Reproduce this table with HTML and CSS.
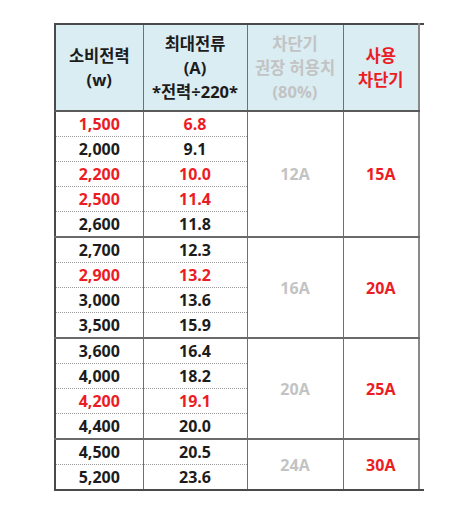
FILE: index.html
```html
<!DOCTYPE html>
<html lang="ko">
<head>
<meta charset="utf-8">
<link rel="stylesheet" href="styles.css">
</head>
<body>
<table class="tbl">
  <colgroup>
    <col class="c1"><col class="c2"><col class="c3"><col class="c4"><col class="c5">
  </colgroup>
  <thead>
    <tr>
      <th>소비전력<br>(w)</th>
      <th>최대전류<br>(A)<br>*전력÷220*</th>
      <th class="grey">차단기<br>권장 허용치<br>(80%)</th>
      <th class="red">사용<br>차단기</th>
      <th class="edge"></th>
    </tr>
  </thead>
  <tbody class="grp">
    <tr><td class="red">1,500</td><td class="red">6.8</td><td class="grey big" rowspan="5">12A</td><td class="red big" rowspan="5">15A</td><td class="edge" rowspan="5"></td></tr>
    <tr><td>2,000</td><td>9.1</td></tr>
    <tr><td class="red">2,200</td><td class="red">10.0</td></tr>
    <tr><td class="red">2,500</td><td class="red">11.4</td></tr>
    <tr class="last"><td>2,600</td><td>11.8</td></tr>
  </tbody>
  <tbody class="grp">
    <tr><td>2,700</td><td>12.3</td><td class="grey big" rowspan="4">16A</td><td class="red big" rowspan="4">20A</td><td class="edge" rowspan="4"></td></tr>
    <tr><td class="red">2,900</td><td class="red">13.2</td></tr>
    <tr><td>3,000</td><td>13.6</td></tr>
    <tr class="last"><td>3,500</td><td>15.9</td></tr>
  </tbody>
  <tbody class="grp">
    <tr><td>3,600</td><td>16.4</td><td class="grey big" rowspan="4">20A</td><td class="red big" rowspan="4">25A</td><td class="edge" rowspan="4"></td></tr>
    <tr><td>4,000</td><td>18.2</td></tr>
    <tr><td class="red">4,200</td><td class="red">19.1</td></tr>
    <tr class="last"><td>4,400</td><td>20.0</td></tr>
  </tbody>
  <tbody class="grp final">
    <tr><td>4,500</td><td>20.5</td><td class="grey big" rowspan="2">24A</td><td class="red big" rowspan="2">30A</td><td class="edge" rowspan="2"></td></tr>
    <tr class="last"><td>5,200</td><td>23.6</td></tr>
  </tbody>
</table>
</body>
</html>
```

FILE: styles.css
```css
html, body {
  margin: 0;
  padding: 0;
  background: #ffffff;
}

body {
  padding: 23px 0 0 54px;
  font-family: "Open Sans", "Noto Sans CJK KR", sans-serif;
  font-weight: 700;
  color: #1c1c1c;
}

.tbl {
  border-collapse: collapse;
  table-layout: fixed;
  width: 369px;
}

.c1 { width: 88px; }
.c2 { width: 104px; }
.c3 { width: 96px; }
.c4 { width: 76px; }
.c5 { width: 5px; }

.tbl th {
  height: 85px;
  padding: 0;
  background: #daedf3;
  font-size: 16.5px;
  line-height: 24px;
  font-weight: 700;
  text-align: center;
  vertical-align: middle;
  border-top: 2px solid #4a4a4a;
  border-bottom: 2px solid #5a5a5a;
  border-left: 1.5px solid #707070;
  border-right: 1.5px solid #707070;
}

.tbl th:first-child {
  border-left: 2px solid #4a4a4a;
}

.tbl th:nth-child(4) {
  border-right: 2px solid #8a8a8a;
}

.tbl th.edge {
  background: transparent;
  border-left: 2px solid #8a8a8a;
  border-right: none;
  border-bottom: none;
}

.tbl td {
  height: 24px;
  padding: 0;
  text-align: center;
  vertical-align: middle;
  font-size: 16px;
  line-height: 24px;
  border-left: 1.5px solid #707070;
  border-right: 1.5px solid #707070;
  border-bottom: 1px dotted #9a9a9a;
}

.tbl tr td:first-child {
  border-left: 2px solid #4a4a4a;
}

.tbl tr.last td {
  border-bottom: 2px solid #6a6a6a;
}

.tbl td.big {
  border-bottom: 2px solid #6a6a6a;
  font-size: 16px;
}

.tbl td:nth-child(4).big {
  border-right: 2px solid #8a8a8a;
}

.tbl td.edge {
  border-left: 2px solid #8a8a8a;
  border-right: none;
  border-bottom: none;
}

.tbl tbody.final tr.last td,
.tbl tbody.final td.big,
.tbl tbody.final td.edge {
  border-bottom: 2px solid #4a4a4a;
}

.red {
  color: #ec1c24;
}

.grey {
  color: #c3c3c3;
}
```
